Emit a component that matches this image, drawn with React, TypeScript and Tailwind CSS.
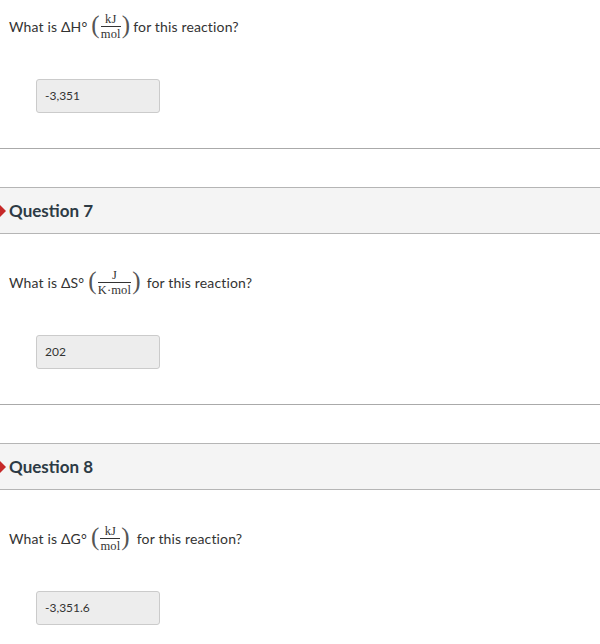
import React from "react";

function Frac({ num, den, after }: { num: string; den: string; after: string }) {
  return (
    <span className={`inline-flex items-center ml-[4px] ${after}`} style={{ fontFamily: '"Liberation Serif", serif' }}>
      <span className="text-[25px] leading-none font-light text-[#555] -mt-[3px]">(</span>
      <span className="inline-flex flex-col items-center text-[12.5px] leading-[12px] text-[#333] px-[1px]">
        <span className="pb-[1px]">{num}</span>
        <span className="border-t border-[#333] pt-[1px]">{den}</span>
      </span>
      <span className="text-[25px] leading-none font-light text-[#555] -mt-[3px]">)</span>
    </span>
  );
}

function Prompt({ sym, num, den, after }: { sym: string; num: string; den: string; after: string }) {
  return (
    <div className="flex items-center h-[40px] pl-[9px] text-[14px] tracking-[0.15px] text-[#333]">
      <span>What is Δ{sym}°</span>
      <Frac num={num} den={den} after={after} />
      <span>for this reaction?</span>
    </div>
  );
}

function Answer({ value }: { value: string }) {
  return (
    <div className="ml-[36px] mt-[33px] w-[124px] h-[34px] flex items-center px-[8px] bg-[#ededed] border border-[#cbcbcb] rounded-[3px] text-[12px] text-[#333]">
      {value}
    </div>
  );
}

function Header({ n }: { n: number }) {
  return (
    <div className="flex items-center h-[47px] bg-[#f4f4f4] border-y border-[#b5b5b5]">
      <svg width="6" height="12" viewBox="0 0 6 12" className="shrink-0">
        <polygon points="0,0 6,6 0,12" fill="#c62828" />
      </svg>
      <span className="ml-[3px] text-[17px] font-bold text-[#2d3b45]">Question {n}</span>
    </div>
  );
}

export default function App() {
  return (
    <div className="w-[600px] h-[644px] overflow-hidden bg-white" style={{ fontFamily: "Lato, 'Liberation Sans', sans-serif" }}>
      <div className="pt-[6px]">
        <Prompt sym="H" num="kJ" den="mol" after="mr-[3px]" />
        <Answer value="-3,351" />
        <div className="mt-[35px] border-t border-[#aaaaaa]" />
      </div>

      <div className="mt-[38px]">
        <Header n={7} />
        <div className="pt-[28px]">
          <Prompt sym="S" num="J" den="K·mol" after="mr-[6px]" />
          <Answer value="202" />
          <div className="mt-[35px] border-t border-[#aaaaaa]" />
        </div>
      </div>

      <div className="mt-[38px]">
        <Header n={8} />
        <div className="pt-[28px]">
          <Prompt sym="G" num="kJ" den="mol" after="mr-[7px]" />
          <Answer value="-3,351.6" />
        </div>
      </div>
    </div>
  );
}
